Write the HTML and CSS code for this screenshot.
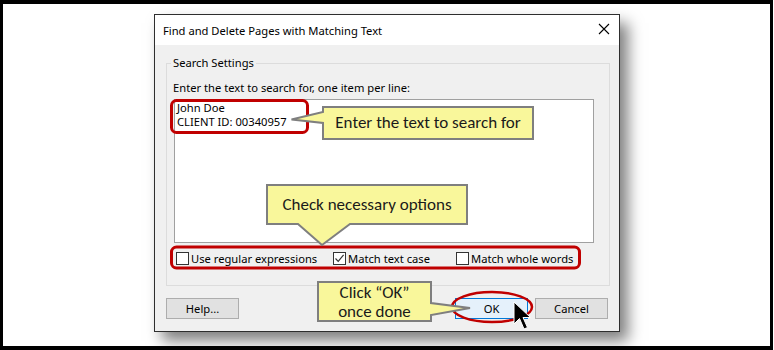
FILE: index.html
```html
<!DOCTYPE html>
<html>
<head>
<meta charset="utf-8">
<link rel="stylesheet" href="styles.css">
</head>
<body>
<div class="stage">
  <div class="frame">
    <div class="dialog">
      <div class="titlebar">
        <span class="title">Find and Delete Pages with Matching Text</span>
        <svg class="close" width="12" height="12" viewBox="0 0 12 12"><path d="M1 1L11 11M11 1L1 11" stroke="#000" stroke-width="1.1" fill="none"/></svg>
      </div>
      <div class="body">
        <div class="group">
          <div class="legend">Search Settings</div>
          <div class="prompt">Enter the text to search for, one item per line:</div>
          <div class="textbox">
            <div class="tline">John Doe</div>
            <div class="tline">CLIENT ID: 00340957</div>
          </div>
          <div class="checks">
            <label class="check c1"><span class="box"></span>Use regular expressions</label>
            <label class="check c2"><span class="box"><svg width="11" height="11" viewBox="0 0 11 11"><path d="M1.5 5.5L4.2 8.3L9.6 1.8" stroke="#333" stroke-width="1.2" fill="none"/></svg></span>Match text case</label>
            <label class="check c3"><span class="box"></span>Match whole words</label>
          </div>
        </div>
        <div class="buttons">
          <div class="btn help">Help...</div>
          <div class="spacer"></div>
          <div class="btn ok">OK</div>
          <div class="btn cancel">Cancel</div>
        </div>
      </div>
    </div>
  </div>

  <svg class="overlay" width="774" height="350" viewBox="0 0 774 350">
    <rect x="171.5" y="100.5" width="136" height="32" rx="5" fill="none" stroke="#c00000" stroke-width="3"/>
    <rect x="171.5" y="247" width="408" height="21" rx="5" fill="none" stroke="#c00000" stroke-width="3"/>
    <ellipse cx="492" cy="307" rx="40" ry="15" fill="none" stroke="#c00000" stroke-width="2.5"/>
    <polygon points="323,107 533,107 533,139 323,139 323,123 291.5,119.5 323,112" fill="#f9f79b" stroke="#7f7f7f" stroke-width="2" stroke-linejoin="miter"/>
    <polygon points="267,185 467,185 467,224 350,224 322,245 298,224 267,224" fill="#f9f79b" stroke="#7f7f7f" stroke-width="2"/>
    <polygon points="318,282 431,282 431,303 470,308 431,315 431,321 318,321" fill="#f9f79b" stroke="#7f7f7f" stroke-width="2"/>
    <polygon points="514,302 514,324 519.5,318.5 524,329 527.5,327.5 523,317.5 530.5,317.5" fill="#000" stroke="#fff" stroke-width="1"/>
  </svg>
  <div class="note n1">Enter the text to search for</div>
  <div class="note n2">Check necessary options</div>
  <div class="note n3">Click “OK”<br>once done</div>
</div>
</body>
</html>
```
FILE: styles.css
```css
* { box-sizing: border-box; }
html, body { margin: 0; padding: 0; background: #fff; }
body { font-family: "Noto Sans", "Open Sans", sans-serif; font-size: 11.2px; color: #000; }
.stage { position: relative; width: 774px; height: 350px; overflow: hidden; }
.frame {
  width: 773px; height: 350px;
  border: 3px solid #000; border-top-width: 4px; border-bottom-width: 4px;
  padding: 10px 0 0 151px;
  background: #fff;
}
.dialog {
  width: 466px; height: 318px;
  border: 1px solid #2e2e2e;
  background: #f0f0f0;
  box-shadow: 8px 9px 14px rgba(0,0,0,0.5);
  display: flex; flex-direction: column;
}
.titlebar {
  height: 30px; background: #fff;
  display: flex; align-items: center; justify-content: space-between;
  padding: 0 9px 0 8px;
}
.title { line-height: 14px; color: #000; margin-top: 1px; }
.close { margin-top: -3px; }
.body { flex: 1; display: flex; flex-direction: column; padding: 0 9px 0 11px; }
.group {
  margin-top: 18px;
  height: 223px;
  border: 1px solid #dcdcdc;
  padding: 0 0 0 6px;
  display: flex; flex-direction: column;
}
.legend {
  margin-top: -8px; margin-left: -2px; padding: 0 2px;
  height: 14px; line-height: 14px;
  background: #f0f0f0; align-self: flex-start;
}
.prompt { margin-top: 11px; height: 14px; line-height: 14px; }
.textbox {
  margin-top: 4px; margin-left: 1px;
  width: 420px; height: 144px;
  background: #fff; border: 1px solid #a0a0a0;
  padding: 1px 2px;
}
.tline { height: 14px; line-height: 14px; }
.checks { margin-top: 9px; height: 13px; display: flex; align-items: center; }
.check { display: flex; align-items: center; line-height: 13px; }
.box {
  width: 13px; height: 13px; border: 1px solid #333; background: #fff;
  margin-right: 2px; display: flex; align-items: center; justify-content: center;
  flex: none;
}
.c1 { margin-left: 3px; width: 157px; }
.c2 { width: 123px; }
.buttons { margin-top: 12px; height: 21px; display: flex; margin-right: 2px; }
.btn {
  width: 73px; height: 21px; line-height: 19px; text-align: center;
  background: #e1e1e1; border: 1px solid #adadad;
}
.spacer { flex: 1; }
.ok { background: #e5f1fb; border-color: #0078d7; margin-right: 7px; }
.overlay { position: absolute; left: 0; top: 0; }
.note {
  position: absolute;
  font-family: Carlito, Lato, "Open Sans", sans-serif;
  font-size: 17px; color: #1a1a1a; text-align: center; white-space: nowrap;
}
.n1 { left: 323px; top: 107px; width: 210px; height: 32px; line-height: 32px; }
.n2 { left: 267px; top: 185px; width: 200px; height: 39px; line-height: 39px; }
.n3 { left: 318px; top: 282px; width: 113px; height: 39px; line-height: 19px; padding-top: 1px; }
```
